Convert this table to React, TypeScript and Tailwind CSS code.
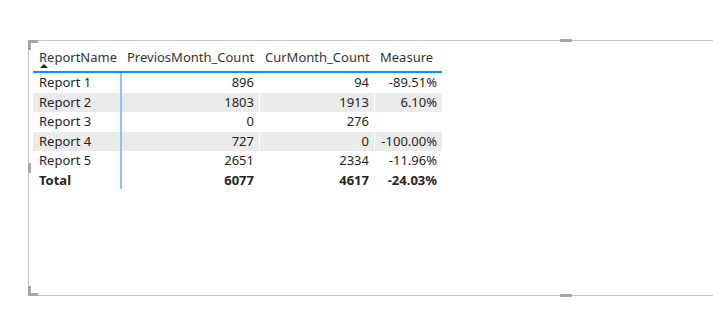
const rows = [
  { name: 'Report 1', prev: '896', cur: '94', measure: '-89.51%' },
  { name: 'Report 2', prev: '1803', cur: '1913', measure: '6.10%' },
  { name: 'Report 3', prev: '0', cur: '276', measure: '' },
  { name: 'Report 4', prev: '727', cur: '0', measure: '-100.00%' },
  { name: 'Report 5', prev: '2651', cur: '2334', measure: '-11.96%' },
]

function App() {
  return (
    <div className="w-[713px] h-[310px] overflow-hidden bg-white font-['Noto_Sans',sans-serif] text-[13px] text-[#252423]">
      <div className="pt-[40px] pl-[28px]">
        <div className="relative w-[1076px] h-[256px] border border-[#c8c8c8] pt-[5px] pl-[4px]">
          {/* resize handles */}
          <div className="absolute -left-[1px] -top-[1px] w-[10px] h-[3px] bg-[#a6a6a6]" />
          <div className="absolute -left-[1px] -top-[1px] w-[3px] h-[10px] bg-[#a6a6a6]" />
          <div className="absolute -left-[1px] -bottom-[1px] w-[10px] h-[3px] bg-[#a6a6a6]" />
          <div className="absolute -left-[1px] -bottom-[1px] w-[3px] h-[10px] bg-[#a6a6a6]" />
          <div className="absolute -left-[1px] top-[122px] w-[3px] h-[10px] bg-[#a6a6a6]" />
          <div className="absolute left-[531px] -top-[2px] w-[12px] h-[3px] bg-[#a6a6a6]" />
          <div className="absolute left-[531px] -bottom-[2px] w-[12px] h-[3px] bg-[#a6a6a6]" />

          <div className="w-[409px]">
            <div className="grid grid-cols-[88px_138px_115px_68px] h-[27px] border-b-2 border-[#118dff] text-[#333333]">
              <div className="relative pl-[6px] pt-[2px] leading-[18px]">
                ReportName
                <svg className="absolute left-[7px] top-[18px]" width="8" height="4" viewBox="0 0 8 4">
                  <polygon points="0,4 8,4 4,0" fill="#252423" />
                </svg>
              </div>
              <div className="pl-[6px] pt-[2px] leading-[18px]">PreviosMonth_Count</div>
              <div className="pl-[6px] pt-[2px] leading-[18px]">CurMonth_Count</div>
              <div className="pl-[6px] pt-[2px] leading-[18px]">Measure</div>
            </div>
            <div className="relative">
              <div className="absolute left-[87px] top-0 w-[2px] h-[116px] bg-[#8cc4f8]" />
              {rows.map((r, i) => (
                <div
                  key={r.name}
                  className={`grid grid-cols-[88px_138px_115px_68px] h-[19.5px] leading-[19.5px] ${i % 2 === 1 ? 'bg-[#ebebeb]' : ''}`}
                >
                  <div className="pl-[6px]">{r.name}</div>
                  <div className="pr-[5px] text-right border-l border-white">{r.prev}</div>
                  <div className="pr-[5px] text-right border-l border-white">{r.cur}</div>
                  <div className="pr-[5px] text-right border-l border-white whitespace-nowrap">{r.measure}</div>
                </div>
              ))}
              <div className="grid grid-cols-[88px_138px_115px_68px] h-[19.5px] leading-[19.5px] font-bold">
                <div className="pl-[6px]">Total</div>
                <div className="pr-[5px] text-right">6077</div>
                <div className="pr-[5px] text-right">4617</div>
                <div className="pr-[5px] text-right">-24.03%</div>
              </div>
            </div>
          </div>
        </div>
      </div>
    </div>
  )
}

export default App
